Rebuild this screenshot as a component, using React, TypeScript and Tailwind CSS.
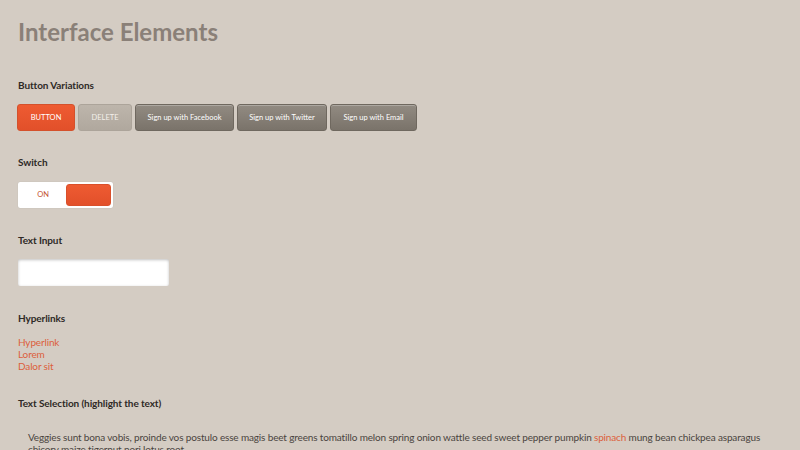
import React from 'react';

function Heading(props: { children: React.ReactNode; className?: string }) {
  return (
    <h3 className={"text-[10px] font-bold leading-[14px] tracking-[-0.1px] text-[#2e2926] " + (props.className || "")}>
      {props.children}
    </h3>
  );
}

export default function App() {
  const grayBtn =
    "h-[27px] rounded-[3px] border border-[#6f685f] bg-gradient-to-b from-[#928b82] to-[#7a736a] text-[7.5px] text-white shadow-[inset_0_1px_0_rgba(255,255,255,0.25)]";

  return (
    <div className="min-h-[450px] w-[800px] overflow-hidden bg-[#d4ccc3] px-[18px] pt-[17px] font-['Lato',sans-serif]">
      <h1 className="text-[24px] font-bold leading-[30px] text-[#8a8078]">Interface Elements</h1>

      <Heading className="mt-[31px]">Button Variations</Heading>
      <div className="mt-[12px] flex gap-[3px] -ml-px">
        <button className="h-[27px] w-[58px] rounded-[3px] border border-[#d4512c] bg-gradient-to-b from-[#ee5b32] to-[#e2502a] text-[7.5px] text-white">
          BUTTON
        </button>
        <button className="h-[27px] w-[54px] rounded-[3px] border border-[#aca49a] bg-gradient-to-b from-[#bdb5ab] to-[#b0a89e] text-[7.5px] text-[#f3efea]">
          DELETE
        </button>
        <button className={grayBtn + " w-[99px]"}>Sign up with Facebook</button>
        <button className={grayBtn + " w-[90px]"}>Sign up with Twitter</button>
        <button className={grayBtn + " w-[87px]"}>Sign up with Email</button>
      </div>

      <Heading className="mt-[24px]">Switch</Heading>
      <div className="mt-[13px] flex h-[26px] w-[95px] items-center rounded-[2px] bg-white p-[2px] shadow-[0_0_1px_rgba(0,0,0,0.2)]">
        <span className="flex w-[46px] justify-center text-[7.5px] text-[#c4532f]">ON</span>
        <span className="h-full flex-1 rounded-[3px] border border-[#d9502b] bg-gradient-to-b from-[#ee5b32] to-[#e2502a]" />
      </div>

      <Heading className="mt-[25px]">Text Input</Heading>
      <input
        type="text"
        className="mt-[12px] block h-[27px] w-[151px] rounded-[2px] bg-white shadow-[inset_0_1px_3px_rgba(0,0,0,0.25)] outline-none"
      />

      <Heading className="mt-[25px]">Hyperlinks</Heading>
      <div className="mt-[11px] flex flex-col text-[10px] leading-[12px] tracking-[-0.15px] text-[#dc5f3c]">
        <a href="#">Hyperlink</a>
        <a href="#">Lorem</a>
        <a href="#">Dalor sit</a>
      </div>

      <Heading className="mt-[24px]">Text Selection (highlight the text)</Heading>
      <p className="mt-[21px] pl-[10px] pr-[16px] text-[10px] leading-[12px] tracking-[-0.15px] text-[#4a4440]">
        Veggies sunt bona vobis, proinde vos postulo esse magis beet greens tomatillo melon spring onion wattle seed sweet
        pepper pumpkin <a href="#" className="text-[#dc5f3c]">spinach</a> mung bean chickpea asparagus chicory maize
        tigernut nori lotus root.
      </p>
    </div>
  );
}
